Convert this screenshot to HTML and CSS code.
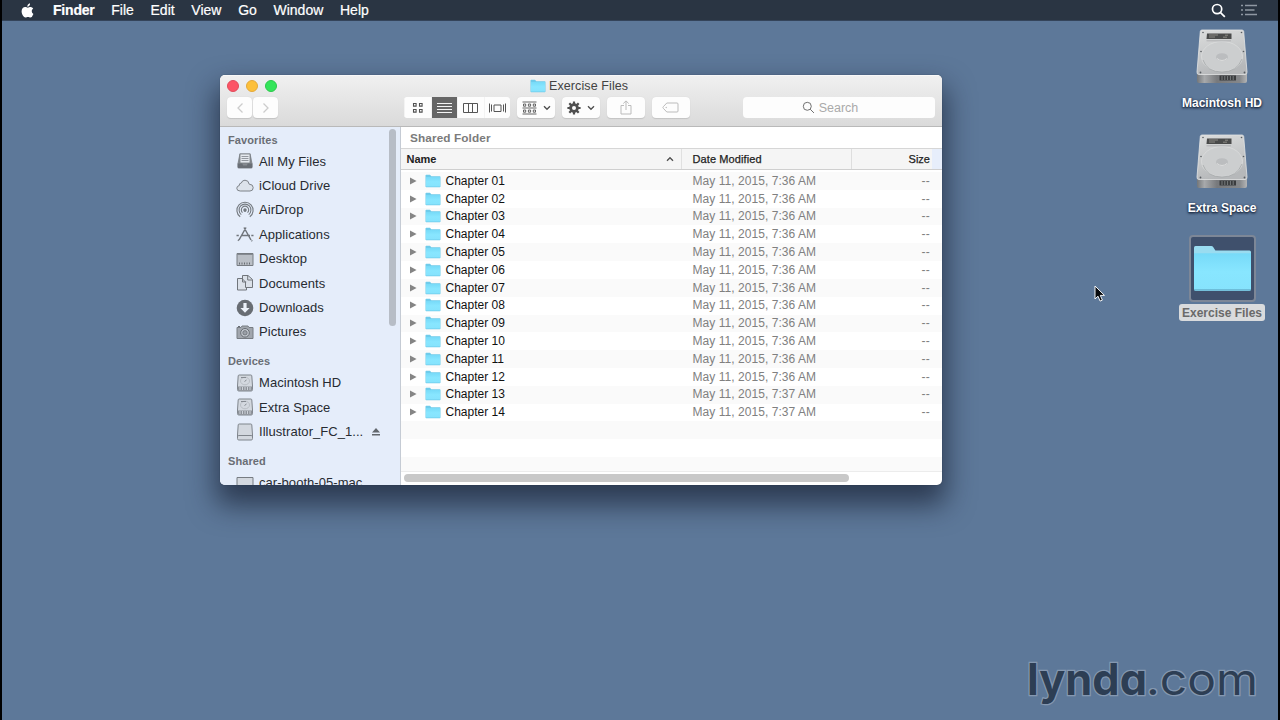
FILE: index.html
```
<!DOCTYPE html>
<html lang="en">
<head>
    <meta charset="UTF-8">
    <meta name="viewport" content="width=device-width, initial-scale=1.0">
    <title>Exercise Files</title>
    <link rel="stylesheet" href="styles.css">
</head>
<body>
    <!-- Shared icons -->
    <svg class="defs" aria-hidden="true">
        <defs>
            <linearGradient id="folderFill" x1="0" y1="0" x2="0" y2="1">
                <stop offset="0" stop-color="#77daf8"/>
                <stop offset="0.5" stop-color="#88e6ff"/>
                <stop offset="1" stop-color="#86e3fd"/>
            </linearGradient>
            <linearGradient id="driveTop" x1="0" y1="0" x2="0.3" y2="1">
                <stop offset="0" stop-color="#dcdddd"/>
                <stop offset="0.6" stop-color="#c6c8c9"/>
                <stop offset="1" stop-color="#b6b8ba"/>
            </linearGradient>
            <linearGradient id="driveFront" x1="0" y1="0" x2="1" y2="0">
                <stop offset="0" stop-color="#737679"/>
                <stop offset="0.15" stop-color="#a7a9ab"/>
                <stop offset="0.4" stop-color="#77797c"/>
                <stop offset="0.85" stop-color="#85878a"/>
                <stop offset="1" stop-color="#b4b5b6"/>
            </linearGradient>
        </defs>
        <symbol id="folder" viewBox="0 0 16 14">
            <path d="M.5 1.5Q.5.8 1.2.8H5l1.3 1.4h8.5q.7 0 .7.7v9.6q0 .7-.7.7H1.2q-.7 0-.7-.7z" fill="#6fcbea"/>
            <path d="M1 3h14v9.500H1z" fill="url(#folderFill)"/>
        </symbol>
        <symbol id="drive" viewBox="0 0 54 56">
            <path d="M2 45h50v7q0 2-2 2H4q-2 0-2-2z" fill="url(#driveFront)"/>
            <path d="M7 1h40q1.500 0 1.700 1.500L52 43q.2 2.500-2 2.500H4Q1.800 45.500 2 43L5.300 2.500Q5.500 1 7 1z" fill="url(#driveTop)" stroke="#e3e4e4" stroke-width=".8"/>
            <ellipse cx="27" cy="27.500" rx="20.500" ry="15" fill="#cccecf" stroke="#dcdddd" stroke-width=".8"/>
            <path d="M8 31q4 12 19 12t20-13" fill="none" stroke="#a5a8aa" stroke-width=".8"/>
            <ellipse cx="27" cy="28" rx="6" ry="3.800" fill="#bbbdbf"/>
            <path d="M22 29.500q5 4 10 0" fill="none" stroke="#dcdddd"/>
            <path d="M12 4.500h24.500v5.500H11.500z" fill="#4a4b4b"/>
            <path d="M14 6h9M14 8h6M28 8.200h4M30 6.200h3" stroke="#92908a" stroke-width=".9"/>
            <path d="M11.500 11.800H36" stroke="#a9abac" stroke-width=".8"/>
            <g fill="#585d62">
                <circle cx="8" cy="3.500" r=".8"/><circle cx="46.500" cy="3.500" r=".8"/>
                <circle cx="6" cy="22.500" r=".8"/><circle cx="48.500" cy="22.500" r=".8"/>
                <circle cx="5.500" cy="43.500" r=".9"/><circle cx="49.500" cy="43.500" r=".9"/>
            </g>
            <path d="M24.500 46.500h16.500v5H24.500z" fill="#3a3c3e"/>
            <path d="M27 47v4M29.800 47v4M32.600 47v4M35.400 47v4M38.200 47v4" stroke="#888b8d" stroke-width=".8"/>
        </symbol>
        <symbol id="disk" viewBox="0 0 18 18">
            <path d="M3.200 1h11.600q.9 0 1 .9L16.500 12v3.600q0 1.400-1.300 1.400H2.800q-1.300 0-1.300-1.400V12l.7-10.100q.1-.9 1-.9z" fill="#d3d8df" stroke="#7f858c"/>
            <path d="M1.700 12.500h14.600v3q0 1.200-1.200 1.200H2.900q-1.200 0-1.200-1.200z" fill="#8d9299"/>
            <path d="M4 13v3M6.500 13v3M9 13v3M11.500 13v3M14 13v3" stroke="#cdd2d9"/>
            <ellipse cx="9" cy="7" rx="4.500" ry="3.800" fill="none" stroke="#b2b7be" stroke-width=".8"/>
            <path d="M8.500 7.500l2-1.500M5 3.500h5" stroke="#858a91"/>
        </symbol>
        <symbol id="chevron" viewBox="0 0 8 6">
            <path d="M1 1.200l3 3 3-3" fill="none" stroke="#515151" stroke-width="1.400"/>
        </symbol>
        <symbol id="glass" viewBox="0 0 14 14">
            <circle cx="5.700" cy="5.700" r="4.300" fill="none" stroke="currentColor"/>
            <path d="M8.900 8.900l4 4" stroke="currentColor"/>
        </symbol>
    </svg>

    <div class="desktop">
        <nav class="menubar">
            <svg class="apple" viewBox="0 0 13 15" fill="#fff">
                <path d="M9 .3q.2 1.500-.7 2.500T6.300 3.800Q6.200 2.500 7 1.500T9 .3z"/>
                <path d="M12.400 11q-1.300 3.500-2.900 3.500c-1 0-1.300-.6-2.500-.6s-1.600.6-2.500.6C2.700 14.500.6 11.300.6 8.300c0-2.800 1.800-4.300 3.500-4.300 1.100 0 2 .7 2.700.7S8.600 4 9.700 4q1.600.1 2.500 1.400-1.500 1-1.500 2.700 0 2.100 1.700 2.900z"/>
            </svg>
            <ul class="menus">
                <li class="app">Finder</li>
                <li>File</li>
                <li>Edit</li>
                <li>View</li>
                <li>Go</li>
                <li>Window</li>
                <li>Help</li>
            </ul>
            <div class="extras">
                <svg class="spotlight"><use href="#glass"/></svg>
                <svg class="notify" viewBox="0 0 18 12" stroke="#8f98a3" stroke-width="1.300">
                    <path d="M1 1.500h2M1 6h2M1 10.500h2M5 1.500h12M5 6h9.500M5 10.500h12"/>
                </svg>
            </div>
        </nav>

        <main class="window">
            <header class="titlebar">
                <div class="title-row">
                    <div class="lights"><i class="red"></i><i class="yellow"></i><i class="green"></i></div>
                    <div class="title"><svg><use href="#folder"/></svg><span>Exercise Files</span></div>
                </div>
                <div class="toolbar">
                    <div class="nav-buttons">
                        <button><svg width="8" height="12" viewBox="0 0 8 12"><path d="M6.500 1.500L2 6l4.500 4.500" fill="none" stroke="#ccc" stroke-width="1.300"/></svg></button>
                        <button><svg width="8" height="12" viewBox="0 0 8 12"><path d="M1.500 1.500L6 6l-4.500 4.500" fill="none" stroke="#ccc" stroke-width="1.300"/></svg></button>
                    </div>
                    <div class="views">
                        <button><svg width="12" height="12" viewBox="0 0 12 12"><path d="M1.500 1.500h2.600v2.600H1.500zM7.500 1.500h2.600v2.600H7.500zM1.500 7.500h2.600v2.600H1.500zM7.500 7.500h2.600v2.600H7.500z" fill="none" stroke="#505050" stroke-width="1.100"/></svg></button>
                        <button class="active"><svg width="15" height="12" viewBox="0 0 15 12"><path d="M0 1.500h15M0 4.500h15M0 7.500h15M0 10.500h15" stroke="#f4f4f4"/></svg></button>
                        <button><svg width="17" height="12" viewBox="0 0 17 12"><path d="M1.500 1.500h14v9h-14zM6.500 1.500v9M10.500 1.500v9" fill="none" stroke="#555"/></svg></button>
                        <button><svg width="19" height="12" viewBox="0 0 19 12"><path d="M1.500 1.500v9M3.500 2.500v7M6 3h7v6.500H6zM15.500 2.500v7M17.500 1.500v9" fill="none" stroke="#555"/></svg></button>
                    </div>
                    <button class="tool arrange">
                        <svg width="15" height="14" viewBox="0 0 15 14"><path d="M.5 1h14M.5 7h14M.5 13h14" stroke="#666"/><path d="M1.500 3h2.200v2.200H1.500zM6.400 3h2.200v2.200H6.400zM11.300 3h2.200v2.200h-2.200zM1.500 9h2.200v2.200H1.500zM6.400 9h2.200v2.200H6.400zM11.300 9h2.200v2.200h-2.200z" fill="none" stroke="#555" stroke-width=".9"/></svg>
                        <svg class="chev"><use href="#chevron"/></svg>
                    </button>
                    <button class="tool action">
                        <svg width="14" height="14" viewBox="-7 -7 14 14"><circle r="3.400" fill="none" stroke="#505050" stroke-width="2.800"/><path d="M0-6.600V-4M0 6.600V4M-6.600 0H-4M6.600 0H4M-4.700-4.700l1.800 1.800M4.700 4.700L2.900 2.900M-4.700 4.700l1.800-1.800M4.700-4.700L2.900-2.900" stroke="#505050" stroke-width="2.200"/></svg>
                        <svg class="chev"><use href="#chevron"/></svg>
                    </button>
                    <button class="tool share">
                        <svg width="12" height="15" viewBox="0 0 12 15"><path d="M4 5.500H1v8.500h10V5.500H8M6 10V1M3.300 3.500L6 .9l2.700 2.600" fill="none" stroke="#bbb"/></svg>
                    </button>
                    <button class="tool tag">
                        <svg width="17" height="11" viewBox="0 0 17 11"><path d="M4.800 1H15q1 0 1 1v7q0 1-1 1H4.800L1.300 6.300q-.8-.8 0-1.600z" fill="none" stroke="#bbb"/><circle cx="4.200" cy="5.500" r=".7" fill="#bbb"/></svg>
                    </button>
                    <div class="search"><svg><use href="#glass"/></svg><span>Search</span></div>
                </div>
            </header>

            <div class="content">
                <aside class="sidebar">
                    <div class="places">
                        <h2>Favorites</h2>
                        <ul>
                            <li><svg viewBox="0 0 18 18"><path d="M3.500 1.500h11l2 10v3.500q0 1.500-1.500 1.500H3q-1.500 0-1.500-1.500v-3.500z" fill="#868b91"/><path d="M4 2h10v9H4z" fill="#e5e9ef" stroke="#777c82" stroke-width=".8"/><path d="M5.500 4.500h7M5.500 6.500h7M5.500 8.500h7" stroke="#92979e"/><path d="M1.700 11.500h4.500l1 2h3.600l1-2h4.500v3.500q0 1-1 1H2.700q-1 0-1-1z" fill="#696e75"/></svg>All My Files</li>
                            <li><svg viewBox="0 0 18 18"><path d="M4.200 14q-3.400 0-3.400-2.700 0-2.300 2.400-2.700Q3 6.200 5.300 6q.8-2.800 3.700-2.800 3.600 0 4.200 4 4 .1 4 3.400Q17.200 14 14 14z" fill="#dde3eb" stroke="#7d8288" stroke-width="1"/></svg>iCloud Drive</li>
                            <li><svg viewBox="0 0 18 18" fill="none" stroke="#747a80" stroke-width="1.100"><path d="M4.200 15.800a8.100 8.100 0 1 1 9.600 0"/><path d="M5.300 13.600a5.900 5.900 0 1 1 7.400 0"/><path d="M6.500 11.600a3.700 3.700 0 1 1 5 0"/><path d="M9 9v2"/><circle cx="9" cy="9" r="1.200" fill="#747a80"/></svg>AirDrop</li>
                            <li><svg viewBox="0 0 18 18" fill="none" stroke="#70757b" stroke-width="1.500"><path d="M8 2.500l7 12.500M10 2.500L3 15M5.500 10.500h8.500M.5 10.500h2.300M15.300 10.500h2.200M2 14.800l.8.8M15.500 15.500l.8.600"/></svg>Applications</li>
                            <li><svg viewBox="0 0 18 18"><path d="M1 3.500h16v12H1z" fill="#babfc6" stroke="#777c82"/><path d="M1 4.500h16" stroke="#858a91"/><path d="M3.500 12.500v2M6 12.500v2M8.500 12.500v2M11 12.500v2M13.500 12.500v2" stroke="#686d73"/></svg>Desktop</li>
                            <li><svg viewBox="0 0 18 18" fill="#dbe1e9" stroke="#70757b"><path d="M1.500 4.500h6l3 3v8.500h-9z"/><path d="M6.500 1.500h5.500l4.500 4v8h-7V8L6.500 5z"/><path d="M11.700 1.800V6h4.300M6.500 4.500V8h3.700" fill="none"/></svg>Documents</li>
                            <li><svg viewBox="0 0 18 18"><circle cx="9" cy="9" r="8.300" fill="#686d73"/><path d="M7.400 4h3.200v5h3L9 13.800 4.400 9h3z" fill="#edf2f9"/></svg>Downloads</li>
                            <li><svg viewBox="0 0 18 18"><path d="M1 4.500h4l1-1.500h6l1 1.500h4v11H1z" fill="#a1a6ad" stroke="#777c82"/><circle cx="9" cy="9.800" r="4.300" fill="#c5cad1" stroke="#686d73"/><circle cx="9" cy="9.800" r="2.200" fill="#9ba0a7" stroke="#686d73" stroke-width=".8"/><path d="M2 3.500h2" stroke="#686d73"/></svg>Pictures</li>
                        </ul>
                        <h2>Devices</h2>
                        <ul>
                            <li><svg><use href="#disk"/></svg>Macintosh HD</li>
                            <li><svg><use href="#disk"/></svg>Extra Space</li>
                            <li><svg viewBox="0 0 18 18"><path d="M3.200 1h11.600q.9 0 1 .9L16.500 12v3.600q0 1.400-1.300 1.400H2.800q-1.300 0-1.300-1.400V12l.7-10.100q.1-.9 1-.9zM1.500 13.500q.5-1 1.500-1h12q1 0 1.500 1" fill="#d3d8df" stroke="#7f858c"/></svg>Illustrator_FC_1...
                                <svg class="eject" viewBox="0 0 8 8" fill="#62676d"><path d="M4 0l4 4.500H0zM0 6h8v1.500H0z"/></svg></li>
                        </ul>
                        <h2>Shared</h2>
                        <ul>
                            <li><svg viewBox="0 0 18 18"><path d="M1 3.500h16v11H1z" fill="#d3d8df" stroke="#777c82"/></svg>car-booth-05-mac</li>
                        </ul>
                    </div>
                    <div class="scroll-y"></div>
                </aside>

                <section class="listing">
                    <div class="shared">Shared Folder</div>
                    <div class="columns">
                        <div class="name">Name <svg class="sort"><use href="#chevron"/></svg></div>
                        <div class="date">Date Modified</div>
                        <div class="size">Size</div>
                    </div>
                    <ul class="files" id="files"></ul>
                    <div class="scroll-x"><div class="thumb"></div></div>
                </section>
            </div>
        </main>

        <div class="icons">
            <div class="icon"><svg class="hd"><use href="#drive"/></svg><span>Macintosh HD</span></div>
            <div class="icon second"><svg class="hd"><use href="#drive"/></svg><span>Extra Space</span></div>
            <div class="icon selected">
                <div class="frame">
                    <svg viewBox="0 0 56 46">
                        <path d="M0 2.500Q0 1 1.500 1H17q1.200 0 2 1l2 3.200h33.500Q56 5.200 56 6.700V43q0 1.800-1.500 1.800h-53Q0 44.800 0 43z" fill="#9adcf0"/>
                        <path d="M0 8h56v35q0 1.500-1.500 1.500h-53Q0 44.500 0 43z" fill="url(#folderFill)"/>
                        <path d="M0 44h56" stroke="#64b2ce"/>
                    </svg>
                </div>
                <span>Exercise Files</span>
            </div>
        </div>

        <svg class="cursor" viewBox="0 0 12 18"><path d="M1 1v13l3-2.800 2.100 4.900 2.300-1-2.100-4.700h4.200z" fill="#080a0d" stroke="#f2f4f6" stroke-width="1"/></svg>

        <svg class="logo" viewBox="0 0 240 64">
            <text class="bold" x="7" y="43" textLength="120" lengthAdjust="spacingAndGlyphs">lynda</text>
            <text class="thin" x="126" y="43" textLength="112" lengthAdjust="spacingAndGlyphs">.com</text>
        </svg>
    </div>

    <script>
        const files = document.getElementById('files');
        for (let i = 1; i <= 14; i++) {
            const num = String(i).padStart(2, '0');
            const minute = i > 12 ? 37 : 36;
            const row = document.createElement('li');
            row.innerHTML = `<svg class="arrow" viewBox="0 0 8 8"><path d="M0 0l7.500 4L0 8z" fill="#858585"/></svg>
                <svg class="folder"><use href="#folder"/></svg>
                <span class="name">Chapter ${num}</span>
                <span class="date">May 11, 2015, 7:${minute} AM</span>
                <span class="size">--</span>`;
            files.appendChild(row);
        }
    </script>
</body>
</html>
```

FILE: styles.css
```
/* General Page Styling */
* {
    box-sizing: border-box;
}

body {
    font-family: "Liberation Sans", Arial, sans-serif;
    margin: 0;
    background: #000;
    overflow: hidden;
}

ul {
    list-style: none;
    margin: 0;
    padding: 0;
}

svg {
    display: block;
    flex: none;
}

.defs {
    position: absolute;
    width: 0;
    height: 0;
}

.desktop {
    position: relative;
    height: 720px;
    margin: 0 2px;
    background: #5d7899;
    overflow: hidden;
}

/* Menu Bar */
.menubar {
    display: flex;
    align-items: center;
    height: 21px;
    padding: 0 20px 0 19px;
    background: #2a3543;
    border-bottom: 1px solid #34445a;
    color: #fff;
    font-size: 14px;
    -webkit-text-stroke: 0.2px #fff;
}

.apple {
    width: 13px;
    height: 15px;
    margin-right: 19px;
}

.menus {
    display: flex;
    gap: 16.7px;
}

.menus .app {
    font-weight: bold;
    letter-spacing: -0.2px;
}

.extras {
    display: flex;
    align-items: center;
    gap: 14px;
    margin-left: auto;
}

.spotlight {
    width: 15px;
    height: 15px;
    stroke-width: 1.6;
}

.notify {
    width: 18px;
    height: 12px;
}

/* Finder Window */
.window {
    display: flex;
    flex-direction: column;
    width: 722px;
    height: 410px;
    margin: 54px 0 0 218px;
    border-radius: 5px;
    overflow: hidden;
    background: #fff;
    box-shadow: 0 0 1px rgba(20, 30, 45, 0.7), 0 16px 28px 4px rgba(20, 28, 45, 0.66);
}

.titlebar {
    height: 52px;
    background: linear-gradient(#f0f0f0, #dadada);
    border-top: 1px solid #f8f8f8;
    border-bottom: 1px solid #b9b9b9;
}

.title-row {
    display: flex;
    height: 20px;
    padding: 0 7px;
}

.lights {
    display: flex;
    align-items: center;
    gap: 7px;
    width: 303px;
    height: 19px;
}

.lights i {
    width: 12px;
    height: 12px;
    border: 1px solid #e04c5c;
    border-radius: 50%;
    background: #fc5566;
}

.lights .yellow {
    background: #fdc03a;
    border-color: #e3a93a;
}

.lights .green {
    background: #34e55a;
    border-color: #2bc94c;
}

.title {
    display: flex;
    align-items: center;
    gap: 3px;
    color: #424242;
    font-size: 12.5px;
    letter-spacing: 0.1px;
}

.title svg {
    width: 16px;
    height: 14px;
}

.toolbar {
    display: flex;
    padding: 1px 7px 0;
}

button {
    display: flex;
    align-items: center;
    justify-content: center;
    height: 21px;
    padding: 0;
    border: 0;
    border-radius: 4px;
    background: #fdfdfd;
    box-shadow: 0 0.5px 1px rgba(0, 0, 0, 0.12);
}

.nav-buttons {
    display: flex;
    gap: 1px;
    width: 177px;
}

.nav-buttons button {
    width: 25px;
}

.views {
    display: flex;
    width: 106px;
    border-radius: 4px;
    overflow: hidden;
    background: #fdfdfd;
}

.views button {
    flex: 1;
    border-radius: 0;
    box-shadow: none;
    border-left: 1px solid #f3f3f3;
}

.views .active {
    background: #666;
}

.tool {
    width: 38px;
    margin-left: 7px;
}

.tool.action {
    margin-left: 6.5px;
}

.arrange,
.action {
    gap: 6px;
}

.chev {
    width: 8px;
    height: 6px;
}

.search {
    display: flex;
    align-items: center;
    justify-content: center;
    gap: 4px;
    width: 192px;
    height: 21px;
    margin-left: auto;
    padding-right: 18px;
    border-radius: 4px;
    background: #fdfdfd;
    color: #aaa;
    font-size: 12.5px;
}

.search svg {
    width: 13px;
    height: 13px;
    color: #666;
}

.content {
    display: flex;
    height: 358px;
}

/* Sidebar */
.sidebar {
    display: flex;
    justify-content: space-between;
    width: 181px;
    border-right: 1px solid #c5cbd4;
    background: #e5edfa;
    overflow: hidden;
}

.places {
    padding-left: 8px;
    white-space: nowrap;
}

.places h2 {
    margin: 0;
    padding-top: 3px;
    height: 21px;
    line-height: 20px;
    color: #6a6e75;
    font-size: 11px;
    letter-spacing: 0.1px;
}

.places ul {
    margin-bottom: 7px;
}

.places ul + h2 {
    height: 19.6px;
    padding-top: 1px;
}

.places li {
    display: flex;
    align-items: center;
    gap: 5px;
    height: 24.4px;
    padding: 2px 0 0 8px;
    color: #272b31;
    font-size: 13px;
    letter-spacing: 0.05px;
}

.places li svg {
    width: 18px;
    height: 18px;
}

.places li .eject {
    width: 8px;
    height: 8px;
    margin-left: 4px;
}

.scroll-y {
    width: 7px;
    height: 197px;
    margin: 2px 4px 0 0;
    border-radius: 4px;
    background: #b7bdc6;
}

/* File List */
.listing {
    display: flex;
    flex-direction: column;
    flex: 1;
    font-size: 12px;
}

.shared {
    height: 20.5px;
    padding-left: 9px;
    line-height: 22px;
    color: #7b7b7b;
    font-weight: bold;
    font-size: 11.8px;
    letter-spacing: 0.1px;
}

.columns {
    display: flex;
    height: 22px;
    border-top: 1px solid #d6d6d6;
    border-bottom: 1px solid #cfcfcf;
    background: #f5f5f5;
    line-height: 20px;
    color: #222;
    font-size: 11px;
}

.columns .name {
    display: flex;
    align-items: center;
    justify-content: space-between;
    width: 281px;
    padding: 0 7px 0 5.5px;
    border-right: 1px solid #e0e0e0;
    font-weight: bold;
}

.sort {
    width: 8px;
    height: 6px;
    transform: rotate(180deg);
}

.columns .date {
    width: 170px;
    padding-left: 10.5px;
    border-right: 1px solid #dedede;
    letter-spacing: 0.1px;
    -webkit-text-stroke: 0.25px #222;
}

.columns .size {
    flex: 1;
    padding-right: 12px;
    border-right: 0;
    text-align: right;
    background: linear-gradient(to right, transparent 80px, #e7eefb 80px);
    -webkit-text-stroke: 0.25px #222;
}

.files {
    flex: 1;
    margin-top: 2.3px;
    background: repeating-linear-gradient(#fafafa 0, #fafafa 17.82px, #fff 17.82px, #fff 35.64px);
}

.files li {
    display: flex;
    align-items: center;
    height: 17.82px;
    padding: 0 12px 0 8.5px;
}

.files .arrow {
    width: 7px;
    height: 8px;
}

.files .folder {
    width: 16px;
    height: 14px;
    margin: 0 5px 0 8px;
}

.files .name {
    width: 247px;
    color: #111;
}

.files .date {
    color: #808080;
    letter-spacing: 0.05px;
}

.files .size {
    margin-left: auto;
    color: #808080;
    letter-spacing: 0.3px;
}

.scroll-x {
    height: 14px;
    padding: 2px 3px;
    border-top: 1px solid #ececec;
}

.thumb {
    width: 445px;
    height: 8px;
    border-radius: 4px;
    background: #c8c8c8;
}

/* Desktop Icons */
.icons {
    position: absolute;
    top: 29px;
    right: 8px;
    width: 96px;
}

.icon {
    display: flex;
    flex-direction: column;
    align-items: center;
    height: 105px;
    color: #fff;
    font-size: 12px;
    font-weight: bold;
    text-shadow: 0 1px 2px #1b2940, 0 1px 3px #1b2940;
}

.icon.second {
    height: 103px;
}

.hd {
    width: 54px;
    height: 56px;
    margin-bottom: 11px;
}

.icon.selected {
    color: #6a6a6a;
    text-shadow: none;
}

.frame {
    display: flex;
    align-items: center;
    justify-content: center;
    width: 67px;
    height: 67px;
    margin-top: -2px;
    border: 2px solid #7d8797;
    border-radius: 4px;
    background: #3f506c;
}

.frame svg {
    width: 57px;
    height: 47px;
}

.selected span {
    height: 17px;
    margin-top: 2px;
    padding: 0 3px;
    border-radius: 3px;
    background: #d9dbdd;
    line-height: 18px;
    white-space: nowrap;
}

.cursor {
    position: absolute;
    left: 1092px;
    top: 285px;
    width: 12px;
    height: 18px;
}

/* Watermark */
.logo {
    position: absolute;
    left: 1018px;
    top: 652px;
    width: 240px;
    height: 64px;
    overflow: visible;
    font-family: Inter, sans-serif;
    font-size: 44px;
    font-feature-settings: "cv11", "ss03";
    fill: #2d3e54;
    stroke: #8598b1;
    stroke-width: 2.5px;
    paint-order: stroke;
}

.logo .bold {
    font-weight: 700;
}

.logo .thin {
    font-weight: 400;
}
```
